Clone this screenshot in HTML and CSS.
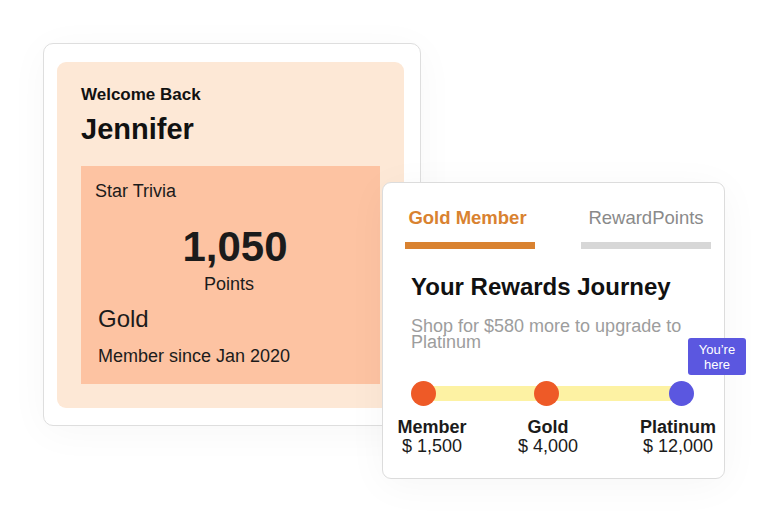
FILE: index.html
```html
<!DOCTYPE html>
<html lang="en">
<head>
<meta charset="utf-8">
<title>Rewards</title>
<link rel="stylesheet" href="styles.css">
</head>
<body>
<div class="canvas">
  <section class="welcome-card">
    <div class="welcome-inner">
      <div class="welcome-label">Welcome Back</div>
      <div class="welcome-name">Jennifer</div>
      <div class="points-box">
        <div class="program">Star Trivia</div>
        <div class="points-num">1,050</div>
        <div class="points-label">Points</div>
        <div class="tier">Gold</div>
        <div class="since">Member since Jan 2020</div>
      </div>
    </div>
  </section>

  <section class="journey-card">
    <div class="tabs">
      <div class="tab tab-active">
        <span class="tab-text">Gold Member</span>
        <span class="tab-bar"></span>
      </div>
      <div class="tab tab-idle">
        <span class="tab-text">RewardPoints</span>
        <span class="tab-bar"></span>
      </div>
    </div>
    <h2 class="journey-title">Your Rewards Journey</h2>
    <p class="journey-sub">Shop for $580 more to upgrade to Platinum</p>
    <div class="tooltip">You’re<br>here</div>
    <div class="track">
      <span class="dot dot-done"></span>
      <span class="seg seg-1"></span>
      <span class="dot dot-done"></span>
      <span class="seg seg-2"></span>
      <span class="dot dot-here"></span>
    </div>
    <div class="levels">
      <div class="level"><div class="level-name">Member</div><div class="level-amt">$ 1,500</div></div>
      <div class="level"><div class="level-name">Gold</div><div class="level-amt">$ 4,000</div></div>
      <div class="level"><div class="level-name">Platinum</div><div class="level-amt">$ 12,000</div></div>
    </div>
  </section>
</div>
</body>
</html>
```

FILE: styles.css
```css
* { box-sizing: border-box; }
html, body { margin: 0; padding: 0; background: #ffffff; }
body {
  font-family: "Liberation Sans", Arial, sans-serif;
  color: #1b1b1b;
  width: 768px;
  height: 522px;
  overflow: hidden;
}
.canvas {
  position: relative;
  width: 768px;
  height: 522px;
  padding: 43px 0 0 43px;
}

/* Left card */
.welcome-card {
  width: 378px;
  height: 383px;
  background: #fff;
  border: 1px solid #dedede;
  border-radius: 10px;
  padding: 18px 0 0 13px;
  box-shadow: 0 6px 40px rgba(0,0,0,0.035);
}
.welcome-inner {
  width: 347px;
  height: 346px;
  background: #fde8d6;
  border-radius: 9px;
  padding: 24px 0 0 24px;
}
.welcome-label {
  font-size: 17px;
  line-height: 18px;
  font-weight: 700;
  color: #111;
}
.welcome-name {
  margin-top: 9px;
  font-size: 29px;
  line-height: 32px;
  font-weight: 700;
  color: #111;
}
.points-box {
  margin-top: 21px;
  width: 299px;
  height: 218px;
  background: #fdc3a2;
  padding: 15px 14px 0 14px;
}
.program {
  font-size: 18px;
  line-height: 20px;
}
.points-num {
  margin-top: 23px;
  font-size: 42px;
  line-height: 46px;
  font-weight: 700;
  text-align: center;
  padding-left: 9px;
}
.points-label {
  margin-top: 4px;
  font-size: 18px;
  line-height: 20px;
  text-align: center;
  padding-right: 3px;
}
.tier {
  margin-top: 11px;
  padding-left: 3px;
  font-size: 24px;
  line-height: 28px;
}
.since {
  margin-top: 13px;
  padding-left: 3px;
  font-size: 18px;
  line-height: 20px;
}

/* Right card */
.journey-card {
  position: absolute;
  left: 382px;
  top: 182px;
  width: 343px;
  height: 297px;
  background: #fff;
  border: 1px solid #dcdcdc;
  border-radius: 9px;
  padding: 25px 0 0 22px;
  box-shadow: 0 6px 40px rgba(0,0,0,0.04);
}
.tabs {
  display: flex;
  gap: 46px;
}
.tab {
  display: flex;
  flex-direction: column;
  align-items: center;
  width: 130px;
}
.tab-text {
  font-size: 18.5px;
  line-height: 20px;
  white-space: nowrap;
}
.tab-bar {
  display: block;
  width: 130px;
  height: 7px;
  margin-top: 14px;
}
.tab-active .tab-text { color: #d98230; font-weight: 700; margin-right: 5px; }
.tab-active .tab-bar { background: #d98230; }
.tab-idle .tab-text { color: #8a8a8a; }
.tab-idle .tab-bar { background: #d7d7d7; }

.journey-title {
  margin: 24px 0 0 6px;
  font-size: 24px;
  line-height: 28px;
  font-weight: 700;
  color: #111;
}
.journey-sub {
  margin: 17px 0 0 6px;
  width: 277px;
  font-size: 18px;
  line-height: 16px;
  color: #9d9d9d;
}
.tooltip {
  position: absolute;
  left: 305px;
  top: 155px;
  width: 58px;
  height: 37px;
  background: #5b57e0;
  color: #fff;
  border-radius: 3px;
  font-size: 13px;
  line-height: 15px;
  text-align: center;
  padding-top: 4px;
}
.track {
  display: flex;
  align-items: center;
  margin: 31px 0 0 6px;
  height: 25px;
}
.dot {
  width: 25px;
  height: 25px;
  border-radius: 50%;
  flex: none;
  position: relative;
  z-index: 1;
}
.dot-done { background: #ee5a27; }
.dot-here { background: #5b57e0; }
.seg {
  height: 15px;
  background: #fdf2a3;
  flex: none;
  margin: 0 -6px;
}
.seg-1 { width: 110px; }
.seg-2 { width: 122px; }

.levels {
  display: grid;
  grid-template-columns: 70px 162px 98px;
  margin: 12px 0 0 -8px;
}
.level { text-align: center; }
.level-name {
  font-size: 18px;
  line-height: 19px;
  font-weight: 700;
}
.level-amt {
  font-size: 18px;
  line-height: 19px;
}
```
